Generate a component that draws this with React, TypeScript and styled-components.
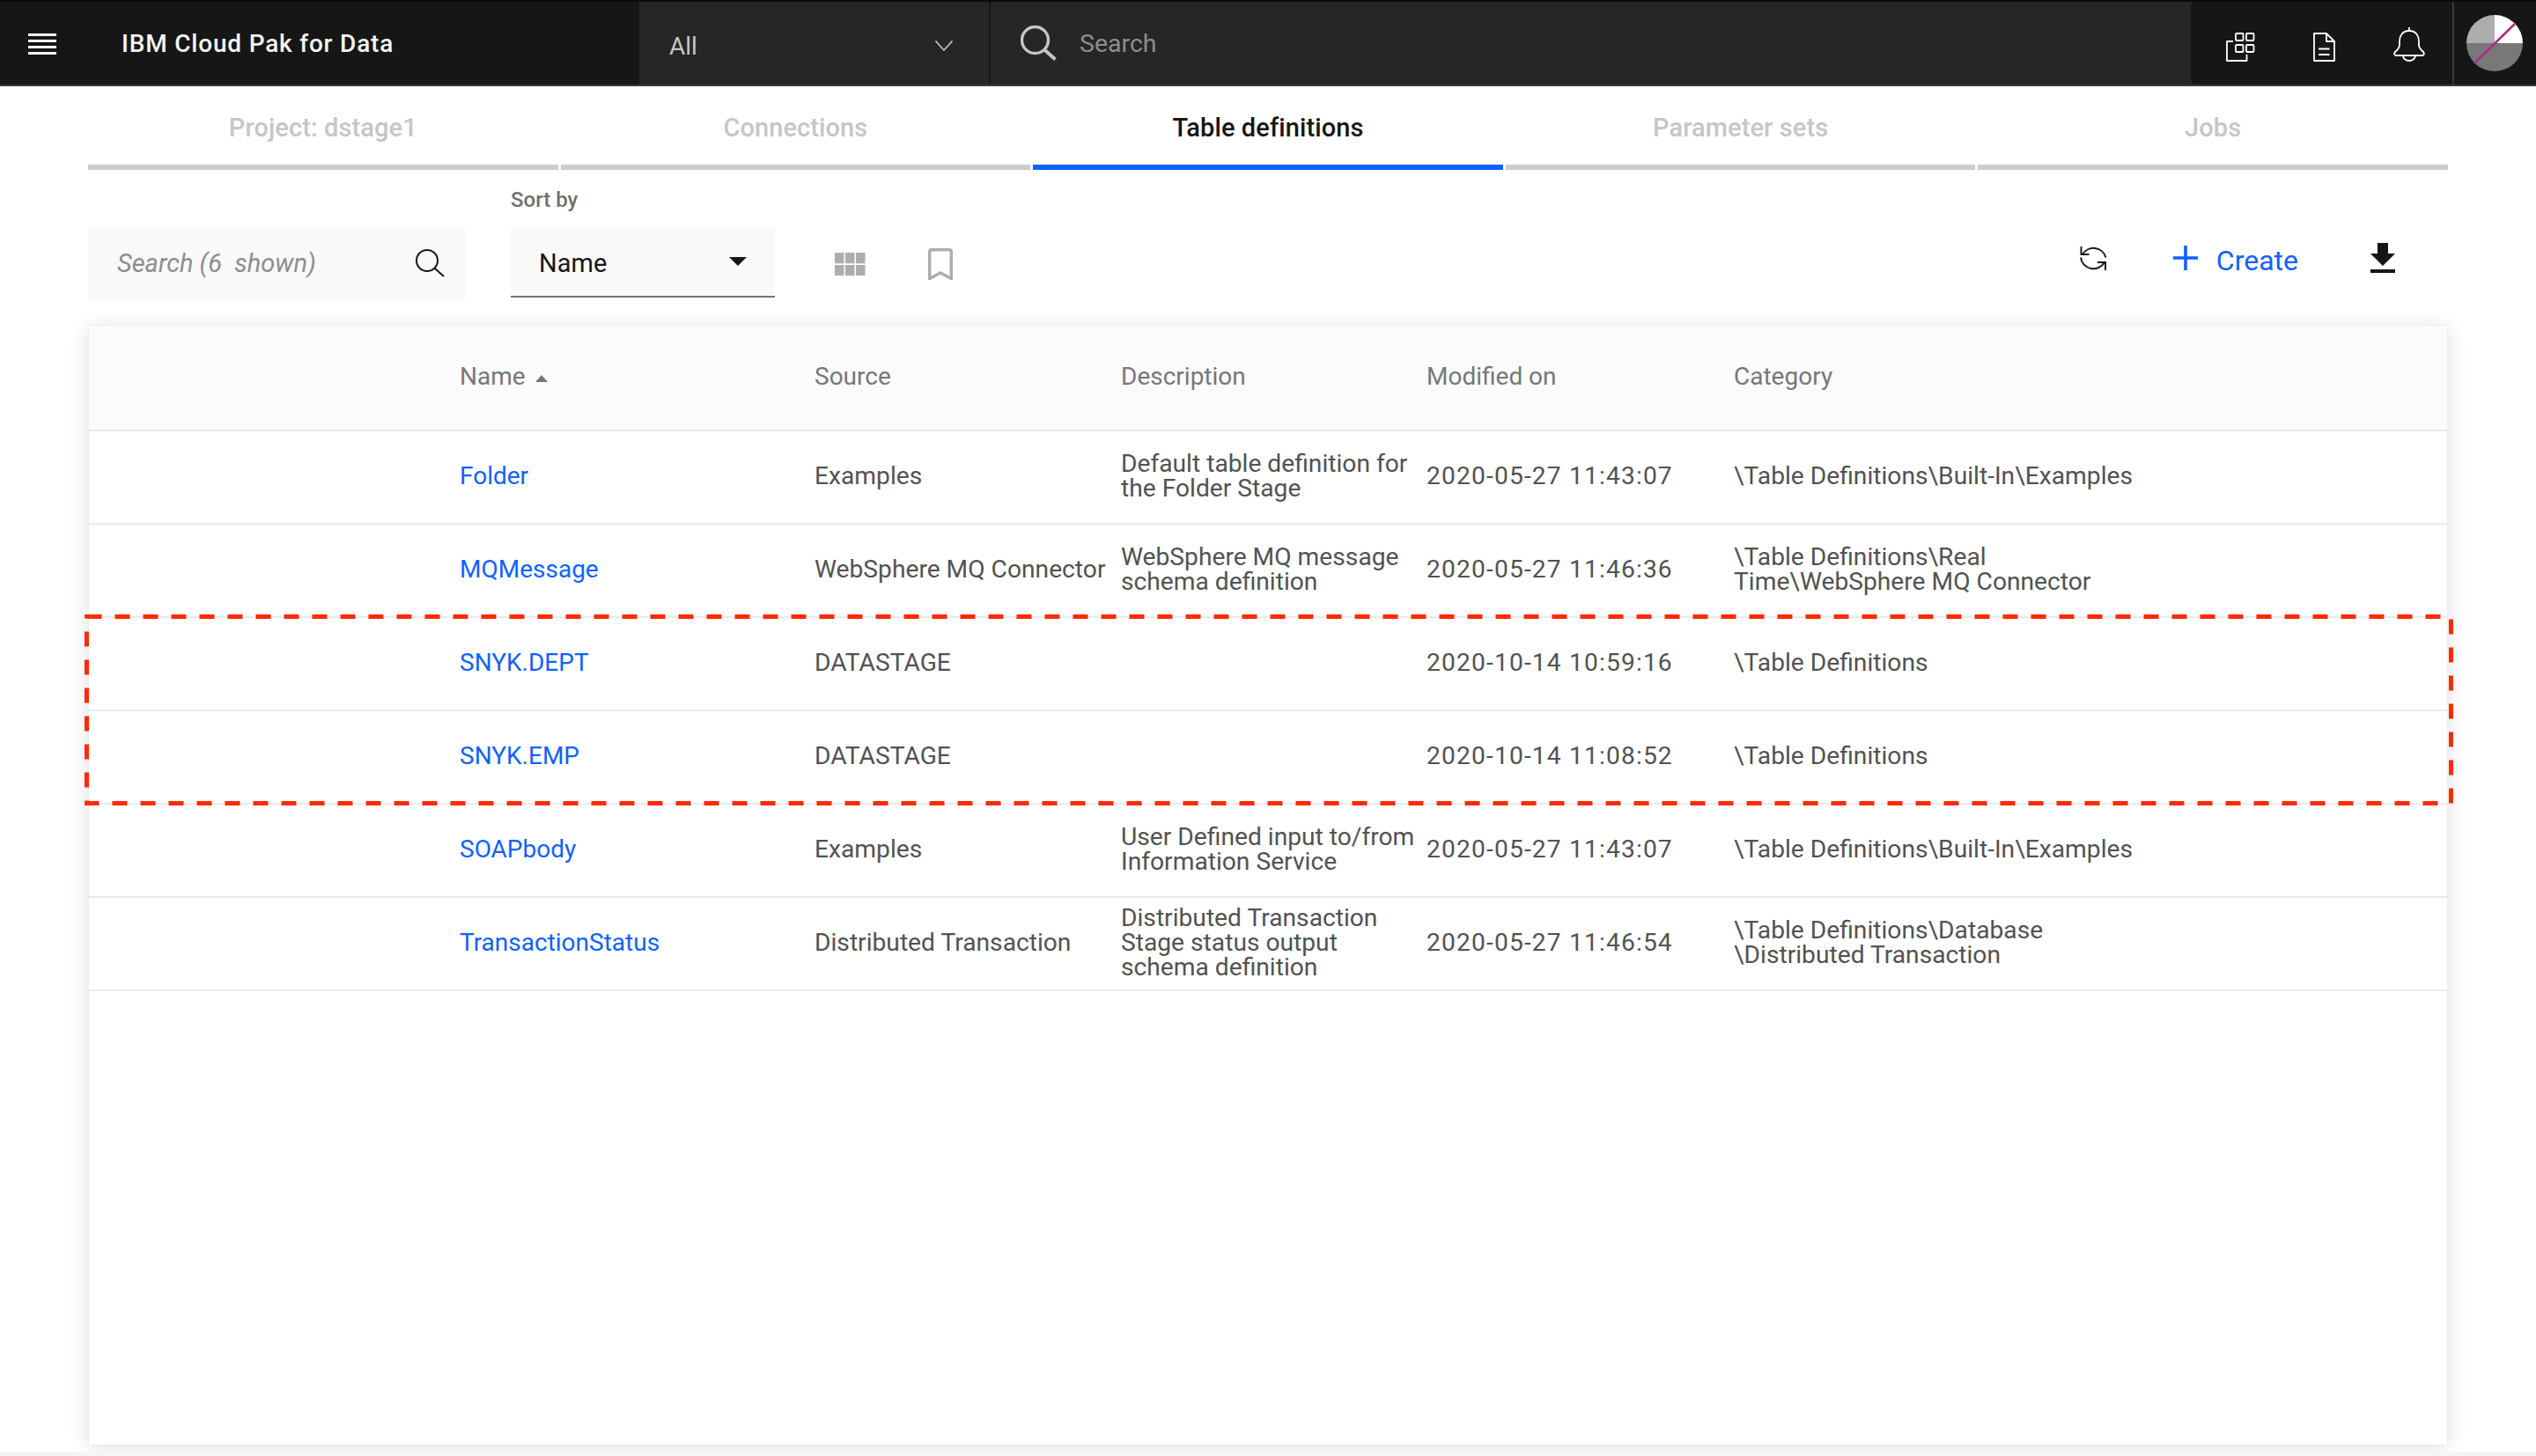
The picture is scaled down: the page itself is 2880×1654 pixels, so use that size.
import React from "react";
import styled, { createGlobalStyle } from "styled-components";

const FONT = `"Roboto", "Liberation Sans", sans-serif`;

const rows = [
  {
    name: "Folder",
    source: "Examples",
    description: "Default table definition for the Folder Stage",
    modified: "2020-05-27 11:43:07",
    category: "\\Table Definitions\\Built-In\\Examples",
  },
  {
    name: "MQMessage",
    source: "WebSphere MQ Connector",
    description: "WebSphere MQ message schema definition",
    modified: "2020-05-27 11:46:36",
    category: "\\Table Definitions\\Real Time\\WebSphere MQ Connector",
  },
  {
    name: "SNYK.DEPT",
    source: "DATASTAGE",
    description: "",
    modified: "2020-10-14 10:59:16",
    category: "\\Table Definitions",
  },
  {
    name: "SNYK.EMP",
    source: "DATASTAGE",
    description: "",
    modified: "2020-10-14 11:08:52",
    category: "\\Table Definitions",
  },
  {
    name: "SOAPbody",
    source: "Examples",
    description: "User Defined input to/from Information Service",
    modified: "2020-05-27 11:43:07",
    category: "\\Table Definitions\\Built-In\\Examples",
  },
  {
    name: "TransactionStatus",
    source: "Distributed Transaction",
    description: "Distributed Transaction Stage status output schema definition",
    modified: "2020-05-27 11:46:54",
    category: "\\Table Definitions\\Database \\Distributed Transaction",
  },
];

const tabs = ["Project: dstage1", "Connections", "Table definitions", "Parameter sets", "Jobs"];

export default function App() {
  return (
    <Page>
      <GlobalStyle />
      <TopBar>
        <Brand>
          <MenuButton aria-label="Menu">
            <svg width="32" height="24" viewBox="0 0 32 24" fill="#f4f4f4">
              <rect y="0" width="32" height="3" />
              <rect y="7" width="32" height="3" />
              <rect y="14" width="32" height="3" />
              <rect y="21" width="32" height="3" />
            </svg>
          </MenuButton>
          <BrandName>IBM Cloud Pak for Data</BrandName>
        </Brand>
        <ScopeSelect>
          <span>All</span>
          <svg width="20" height="12" viewBox="0 0 20 12" fill="none" stroke="#c6c6c6" strokeWidth="1.6">
            <path d="M0.5 0.5 L10 11 L19.5 0.5" />
          </svg>
        </ScopeSelect>
        <GlobalSearch>
          <svg width="41" height="40" viewBox="0 0 41 40" fill="none" stroke="#c6c6c6">
            <circle cx="16.5" cy="16.5" r="15" strokeWidth="3.4" />
            <path d="M26.5 27 L39.5 38.5" strokeWidth="4" />
          </svg>
          <span>Search</span>
        </GlobalSearch>
        <HeaderActions>
          <HeaderIcon>
            <svg width="33" height="33" viewBox="0 0 33 33" fill="none" stroke="#fff" strokeWidth="1.8">
              <rect x="11" y="1" width="8.5" height="8" rx="1" />
              <rect x="23" y="1" width="8.5" height="8" rx="1" />
              <rect x="11" y="14" width="8.5" height="8" rx="1" />
              <rect x="23" y="14" width="8.5" height="8" rx="1" />
              <path d="M8 10 H1 V32 H23.5 V25" strokeLinejoin="round" />
            </svg>
          </HeaderIcon>
          <HeaderIcon>
            <svg width="25" height="33" viewBox="0 0 25 33" fill="none" stroke="#fff" strokeWidth="1.8" strokeLinejoin="round">
              <path d="M1 1 H15 L24 10 V32 H1 Z" />
              <path d="M15 1 V10 H24" />
              <path d="M6 18.5 H18.5 M6 25 H18.5" />
            </svg>
          </HeaderIcon>
          <BellIcon>
            <svg width="36" height="39" viewBox="0 0 36 39" fill="none" stroke="#fff" strokeWidth="1.8" strokeLinejoin="round">
              <path d="M18 0 V4" />
              <path d="M18 4 C10 4 7 10 7 16 V20 C7 24 4 26 2 28 C0.5 29.5 1 32 3 32 H33 C35 32 35.5 29.5 34 28 C32 26 29 24 29 20 V16 C29 10 26 4 18 4 Z" />
              <path d="M11 32 A7 6 0 0 0 25 32" />
            </svg>
          </BellIcon>
        </HeaderActions>
        <AvatarSlot>
          <svg width="64" height="64" viewBox="0 0 64 64">
            <clipPath id="avatar-clip">
              <circle cx="32" cy="32" r="32" />
            </clipPath>
            <g clipPath="url(#avatar-clip)">
              <rect width="32" height="32" fill="#adadad" />
              <rect x="32" width="32" height="32" fill="#fff" />
              <rect y="32" width="64" height="32" fill="#787878" />
            </g>
            <path d="M9 55 L55 10" stroke="#a8307f" strokeWidth="2.6" />
          </svg>
        </AvatarSlot>
      </TopBar>

      <Main>
        <Tabs>
          {tabs.map((tab) => (
            <Tab key={tab} $active={tab === "Table definitions"}>
              {tab}
            </Tab>
          ))}
        </Tabs>

        <Toolbar>
          <FilterBox>
            <span>Search (6&nbsp; shown)</span>
            <svg width="33" height="32" viewBox="0 0 33 32" fill="none" stroke="#161616" strokeWidth="2">
              <circle cx="13" cy="13" r="12" />
              <path d="M22 22 L32 31" />
            </svg>
          </FilterBox>
          <SortField>
            <SortLabel>Sort by</SortLabel>
            <SortSelect>
              <span>Name</span>
              <svg width="20" height="10" viewBox="0 0 20 10" fill="#161616">
                <path d="M0 0 H20 L10 10 Z" />
              </svg>
            </SortSelect>
          </SortField>
          <ViewIcons>
            <svg width="35" height="26" viewBox="0 0 35 26" fill="#adadad">
              <rect x="0" y="0" width="10.5" height="12.3" />
              <rect x="12" y="0" width="10.5" height="12.3" />
              <rect x="24" y="0" width="10.5" height="12.3" />
              <rect x="0" y="14" width="10.5" height="12.3" />
              <rect x="12" y="14" width="10.5" height="12.3" />
              <rect x="24" y="14" width="10.5" height="12.3" />
            </svg>
            <svg width="28" height="36" viewBox="0 0 28 36" fill="none" stroke="#adadad" strokeWidth="3.4">
              <path d="M1.7 36 V4 Q1.7 1.7 4 1.7 H24 Q26.3 1.7 26.3 4 V34.5 L14 28 L1.7 34.5" />
            </svg>
          </ViewIcons>
          <ToolbarActions>
            <RefreshIcon width="31" height="31" viewBox="0 0 31 31" fill="none" stroke="#161616" strokeWidth="2">
              <path d="M1.5 3 V12 H10.5" />
              <path d="M3 12 A14.5 14.5 0 0 1 29.5 15.5" />
              <path d="M29 30 V21 H20" />
              <path d="M28 21 A14.5 14.5 0 0 1 1 15.5" />
            </RefreshIcon>
            <CreateButton>
              <svg width="28" height="28" viewBox="0 0 28 28" fill="none" stroke="#0f62fe" strokeWidth="3.6">
                <path d="M14 0 V28 M0 14 H28" />
              </svg>
              Create
            </CreateButton>
            <svg width="28" height="34" viewBox="0 0 28 34" fill="#161616">
              <path d="M8 0 H20 V12 H28 L14 26 L0 12 H8 Z" />
              <rect y="30" width="28" height="4" />
            </svg>
          </ToolbarActions>
        </Toolbar>

        <TableCard>
          <HeaderRow>
            <HeaderCell>
              Name
              <SortArrow />
            </HeaderCell>
            <HeaderCell>Source</HeaderCell>
            <HeaderCell>Description</HeaderCell>
            <HeaderCell>Modified on</HeaderCell>
            <HeaderCell>Category</HeaderCell>
          </HeaderRow>
          {rows.map((row) => (
            <Row key={row.name}>
              <NameLink>{row.name}</NameLink>
              <Cell>{row.source}</Cell>
              <Cell>{row.description}</Cell>
              <DateCell>{row.modified}</DateCell>
              <CategoryCell>{row.category}</CategoryCell>
            </Row>
          ))}
          <Highlight width="2690" height="217" viewBox="0 0 2690 217" fill="none">
            <rect
              x="2.5"
              y="2.5"
              width="2685"
              height="212"
              stroke="#ff2a00"
              strokeWidth="5"
              strokeDasharray="17 15"
            />
          </Highlight>
        </TableCard>
      </Main>
      <BottomStrip />
    </Page>
  );
}

const GlobalStyle = createGlobalStyle`
  html, body {
    margin: 0;
    padding: 0;
    background: #fff;
  }

  body {
    font-family: ${FONT};
    overflow: hidden;
  }
`;

const Page = styled.div`
  width: 2880px;
  height: 1654px;
  display: flex;
  flex-direction: column;
  overflow: hidden;
  background: #fff;
`;

const TopBar = styled.header`
  flex: none;
  height: 94px;
  display: flex;
  background: #161616;
  border-top: 2px solid #0a0a0a;
  border-bottom: 2px solid #393939;
`;

const Brand = styled.div`
  width: 726px;
  display: flex;
  align-items: center;
  flex: none;
`;

const MenuButton = styled.div`
  width: 138px;
  padding-left: 32px;
  box-sizing: border-box;
  display: flex;
  align-items: center;
  height: 24px;
  margin-top: 2px;
`;

const BrandName = styled.div`
  color: #f4f4f4;
  font-size: 28px;
  font-weight: 500;
  letter-spacing: 0.8px;
`;

const ScopeSelect = styled.div`
  width: 399px;
  flex: none;
  box-sizing: border-box;
  padding: 6px 41px 0 34px;
  background: #262626;
  border-right: 2px solid #161616;
  display: flex;
  align-items: center;
  justify-content: space-between;
  color: #c6c6c6;
  font-size: 28px;
`;

const GlobalSearch = styled.div`
  flex: 1;
  display: flex;
  align-items: center;
  gap: 26px;
  padding-left: 34px;
  background: #262626;
  color: #8d8d8d;
  font-size: 28.5px;
`;

const HeaderActions = styled.div`
  width: 299px;
  flex: none;
  box-sizing: border-box;
  margin-left: -6px;
  padding-left: 40px;
  display: flex;
  align-items: center;
  gap: 66px;
  background: #161616;
  border-right: 2px solid #393939;
  border-radius: 5px 0 0 5px;
`;

const HeaderIcon = styled.div`
  display: flex;
  margin-top: 8px;
`;

const BellIcon = styled(HeaderIcon)`
  margin-top: 2px;
`;

const AvatarSlot = styled.div`
  width: 93px;
  flex: none;
  box-sizing: border-box;
  padding-right: 2px;
  display: flex;
  align-items: center;
  justify-content: center;
`;

const Main = styled.main`
  flex: 1;
  min-height: 0;
  padding: 0 100px 10px;
  display: flex;
  flex-direction: column;
`;

const Tabs = styled.nav`
  flex: none;
  display: grid;
  grid-template-columns: repeat(5, 1fr);
  gap: 3px;
  height: 95px;
`;

const Tab = styled.div<{ $active?: boolean }>`
  display: flex;
  justify-content: center;
  padding-top: 30px;
  box-sizing: border-box;
  border-bottom: 6px solid ${(p) => (p.$active ? "#0f62fe" : "#cccccc")};
  color: ${(p) => (p.$active ? "#161616" : "#c6c6c6")};
  font-size: 29px;
  font-weight: 500;
  letter-spacing: 0.1px;
`;

const Toolbar = styled.div`
  flex: none;
  height: 176px;
  display: flex;
  align-items: flex-start;
`;

const FilterBox = styled.div`
  width: 428px;
  height: 80px;
  margin-top: 67px;
  box-sizing: border-box;
  padding: 0 23px 2px 33px;
  background: #f9f9f9;
  display: flex;
  align-items: center;
  justify-content: space-between;
  color: #8d8d8d;
  font-size: 29px;
  font-style: italic;
`;

const SortField = styled.div`
  margin-left: 52px;
  width: 300px;
  padding-top: 20px;
`;

const SortLabel = styled.div`
  height: 45px;
  color: #6f6f6f;
  font-size: 24px;
  font-weight: 500;
`;

const SortSelect = styled.div`
  height: 80px;
  box-sizing: border-box;
  padding: 4px 32px 0;
  background: #f9f9f9;
  border-bottom: 2px solid #767676;
  display: flex;
  align-items: center;
  justify-content: space-between;
  color: #161616;
  font-size: 29px;

  svg {
    margin-top: -4px;
  }
`;

const ViewIcons = styled.div`
  display: flex;
  align-items: center;
  gap: 71px;
  margin: 89px 0 0 68px;
`;

const ToolbarActions = styled.div`
  margin: 83px 60px 0 auto;
  display: flex;
  align-items: flex-start;
  gap: 75px;
`;

const RefreshIcon = styled.svg`
  margin-top: 1px;
`;

const CreateButton = styled.div`
  display: flex;
  align-items: flex-start;
  gap: 21px;
  margin-top: 1px;
  padding-right: 7px;
  color: #0f62fe;
  font-size: 32px;

  svg {
    margin-top: 2px;
  }
`;

const TableCard = styled.section`
  position: relative;
  flex: none;
  height: 1271px;
  background: #fff;
  border: 1px solid #eeeeee;
  border-width: 1px 1px 0;
  box-shadow: 0 3px 20px rgba(0, 0, 0, 0.13);
`;

const HeaderRow = styled.div`
  height: 118px;
  padding-left: 422px;
  display: grid;
  grid-template-columns: 402px 348px 347px 349px 1fr;
  align-items: center;
  background: #fbfbfb;
  border-bottom: 2px solid #e8e8e8;
`;

const HeaderCell = styled.div`
  color: #777777;
  font-size: 28px;
  display: flex;
  align-items: center;
  padding-bottom: 4px;

  &:first-child {
    margin-left: -1px;
  }
`;

const SortArrow = styled.span`
  margin: 6px 0 0 11px;
  border-left: 7.5px solid transparent;
  border-right: 7.5px solid transparent;
  border-bottom: 8px solid #777777;
`;

const Row = styled.div`
  height: 104px;
  padding-left: 422px;
  display: grid;
  grid-template-columns: 402px 348px 347px 349px 1fr;
  align-items: center;
  border-bottom: 2px solid #eaeaea;
`;

const Cell = styled.div`
  color: #525252;
  font-size: 28.2px;
  line-height: 28px;
  padding-bottom: 2px;
`;

const DateCell = styled(Cell)`
  letter-spacing: 1.15px;
`;

const CategoryCell = styled(Cell)`
  max-width: 490px;
`;

const NameLink = styled.a`
  margin-left: -1px;
  padding-bottom: 2px;
  color: #0f62fe;
  font-size: 28px;
  line-height: 28px;
  cursor: pointer;
`;

const Highlight = styled.svg`
  position: absolute;
  left: -5px;
  top: 328px;
`;

const BottomStrip = styled.div`
  position: relative;
  flex: none;
  height: 4px;
  background: #f4f4f4;
`;
